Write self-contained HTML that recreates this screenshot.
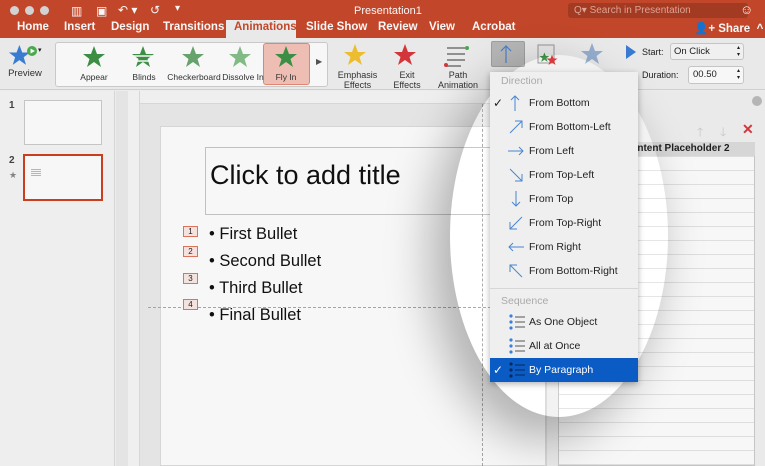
<!DOCTYPE html>
<html><head><meta charset="utf-8"><style>
*{margin:0;padding:0;box-sizing:border-box}
body{width:765px;height:466px;overflow:hidden;position:relative;font-family:"Liberation Sans",sans-serif;background:#f4f4f4;color:#222}
.a{position:absolute}
.tb{left:0;top:0;width:765px;height:38px;background:#c94a2c}
.tab{top:21px;font-size:11.5px;color:#fff;font-weight:bold}
.rib{left:0;top:38px;width:765px;height:52px;background:#f1f1f1;border-bottom:1px solid #d6d6d6}
.lbl{font-size:8.5px;color:#333;text-align:center;line-height:10px}
.mi{position:absolute;left:0;width:148px;height:24px;font-size:10.5px;line-height:24px;color:#222}
.mi span.t{position:absolute;left:39px}
.mi svg{position:absolute;left:18px;top:4px}
.ck{position:absolute;left:3px;font-size:12px}
</style></head><body>
<svg width="0" height="0" style="position:absolute"><defs><polygon id="st" points="12,1 15,9 23,9 16.5,14 19,22 12,17 5,22 7.5,14 1,9 9,9"/></defs></svg>
<div class="a tb"></div>
<div class="a" style="left:10px;top:6px;width:9px;height:9px;border-radius:50%;background:#d9d9d9"></div>
<div class="a" style="left:25px;top:6px;width:9px;height:9px;border-radius:50%;background:#d9d9d9"></div>
<div class="a" style="left:40px;top:6px;width:9px;height:9px;border-radius:50%;background:#d9d9d9"></div>
<div class="a" style="left:71px;top:4px;color:#fff;font-size:12px">▥</div>
<div class="a" style="left:96px;top:4px;color:#fff;font-size:12px">▣</div>
<div class="a" style="left:118px;top:3px;color:#fff;font-size:12px">↶ ▾</div>
<div class="a" style="left:150px;top:3px;color:#fff;font-size:12px">↺</div>
<div class="a" style="left:175px;top:3px;color:#fff;font-size:10px">▾</div>
<div class="a" style="left:354px;top:5px;color:#fff;font-size:11px">Presentation1</div>
<div class="a" style="left:568px;top:3px;width:180px;height:15px;background:#a93c24;border-radius:3px;color:#e7a999;font-size:10px;line-height:15px;padding-left:6px">Q▾ Search in Presentation</div>
<div class="a" style="left:740px;top:2px;color:#fff;font-size:13px">☺</div>
<div class="a" style="left:226px;top:20px;width:70px;height:19px;background:#f1f1f1"></div>
<div class="a tab" style="left:17px">Home</div>
<div class="a tab" style="left:64px">Insert</div>
<div class="a tab" style="left:111px">Design</div>
<div class="a tab" style="left:163px">Transitions</div>
<div class="a tab" style="left:234px;color:#c94a2c">Animations</div>
<div class="a tab" style="left:306px">Slide Show</div>
<div class="a tab" style="left:378px">Review</div>
<div class="a tab" style="left:429px">View</div>
<div class="a tab" style="left:472px">Acrobat</div>
<div class="a tab" style="left:694px">👤+ Share &nbsp;^</div>
<div class="a rib"></div>
<svg class="a" style="left:8px;top:44px" width="30" height="24"><use href="#st" fill="#3b7fd8" transform="scale(0.95)"/><circle cx="24" cy="7" r="5" fill="#4caf50"/><polygon points="22.5,4.5 27,7 22.5,9.5" fill="#fff"/></svg>
<div class="a" style="left:38px;top:46px;font-size:7px">▾</div>
<div class="a lbl" style="left:5px;top:69px;width:40px;font-size:9.5px">Preview</div>
<div class="a" style="left:55px;top:42px;width:273px;height:45px;background:#fff;border:1px solid #d0d0d0;border-radius:3px"></div>
<div class="a" style="left:263px;top:43px;width:47px;height:42px;background:#f6c5bb;border:1px solid #e88a76;border-radius:3px"></div>
<svg class="a" style="left:82px;top:45px" width="26" height="24"><use href="#st" fill="#3e9347"/></svg>
<svg class="a" style="left:131px;top:45px" width="26" height="24"><use href="#st" fill="#3e9347"/><line x1="0" y1="11" x2="26" y2="11" stroke="#fff" stroke-width="1.5"/><line x1="0" y1="16" x2="26" y2="16" stroke="#fff" stroke-width="1.5"/></svg>
<svg class="a" style="left:181px;top:45px" width="26" height="24"><use href="#st" fill="#6aa870"/></svg>
<svg class="a" style="left:228px;top:45px" width="26" height="24"><use href="#st" fill="#86c08a"/></svg>
<svg class="a" style="left:274px;top:45px" width="26" height="24"><use href="#st" fill="#3e9347"/></svg>
<div class="a lbl" style="left:74px;top:72px;width:40px">Appear</div>
<div class="a lbl" style="left:124px;top:72px;width:40px">Blinds</div>
<div class="a lbl" style="left:163px;top:72px;width:62px">Checkerboard</div>
<div class="a lbl" style="left:218px;top:72px;width:50px">Dissolve In</div>
<div class="a lbl" style="left:266px;top:72px;width:40px">Fly In</div>
<div class="a" style="left:316px;top:57px;font-size:8px;color:#555">▶</div>
<svg class="a" style="left:343px;top:43px" width="26" height="24"><use href="#st" fill="#f4c430"/></svg>
<div class="a lbl" style="left:335px;top:70px;width:45px;font-size:9px">Emphasis<br>Effects</div>
<svg class="a" style="left:393px;top:43px" width="26" height="24"><use href="#st" fill="#d9383c"/></svg>
<div class="a lbl" style="left:387px;top:70px;width:40px;font-size:9px">Exit<br>Effects</div>
<svg class="a" style="left:443px;top:45px" width="28" height="22" fill="none" stroke="#777" stroke-width="1.5"><path d="M4 3h18M4 9h18M4 15h18M4 21h14"/><circle cx="24" cy="3" r="2" fill="#4caf50" stroke="none"/><circle cx="3" cy="20" r="2" fill="#d9383c" stroke="none"/></svg>
<div class="a lbl" style="left:433px;top:70px;width:50px;font-size:9px">Path<br>Animation</div>
<div class="a" style="left:491px;top:41px;width:34px;height:26px;background:#bcbcbc;border:1px solid #a5a5a5;border-radius:2px"></div>
<svg class="a" style="left:499px;top:44px" width="14" height="20" fill="none" stroke="#4a86d0" stroke-width="1.2"><path d="M7 19V2M2 7l5-5 5 5"/></svg>
<svg class="a" style="left:537px;top:44px" width="22" height="22"><rect x="1" y="1" width="16" height="18" fill="#eee" stroke="#999"/><use href="#st" fill="#3e9347" transform="translate(2,8) scale(.45)"/><use href="#st" fill="#d9383c" transform="translate(9,10) scale(.5)"/></svg>
<svg class="a" style="left:580px;top:42px" width="26" height="24"><use href="#st" fill="#9ab3d6"/></svg>
<svg class="a" style="left:625px;top:45px" width="12" height="14"><polygon points="1,0 11,7 1,14" fill="#3b7fd8"/></svg>
<div class="a" style="left:642px;top:47px;font-size:9px">Start:</div>
<div class="a" style="left:670px;top:43px;width:74px;height:17px;background:#f8f8f8;border:1px solid #ccc;border-radius:3px;font-size:9.5px;line-height:15px;padding-left:3px">On Click<span style="position:absolute;right:3px;font-size:6px;line-height:7px;top:1px">▴<br>▾</span></div>
<div class="a" style="left:642px;top:70px;font-size:9px">Duration:</div>
<div class="a" style="left:688px;top:66px;width:56px;height:18px;background:#fff;border:1px solid #ccc;border-radius:3px;font-size:9.5px;line-height:16px;padding-left:4px">00.50<span style="position:absolute;right:3px;font-size:6px;line-height:7px;top:1px">▴<br>▾</span></div>
<div class="a" style="left:0;top:91px;width:115px;height:375px;background:#f6f6f6;border-right:1px solid #ddd"></div>
<div class="a" style="left:9px;top:100px;font-size:10px;font-weight:bold;color:#444">1</div>
<div class="a" style="left:24px;top:100px;width:78px;height:45px;background:#fff;border:1px solid #ccc"></div>
<div class="a" style="left:9px;top:155px;font-size:10px;font-weight:bold;color:#444">2</div>
<div class="a" style="left:9px;top:170px;font-size:9px;color:#888">★</div>
<div class="a" style="left:23px;top:154px;width:80px;height:47px;background:#fff;border:2px solid #d2401e"></div>
<div class="a" style="left:31px;top:169px;width:10px;height:1px;background:#bbb;box-shadow:0 2px #bbb,0 4px #bbb,0 6px #bbb"></div>
<div class="a" style="left:116px;top:91px;width:430px;height:375px;background:#ececec"></div>
<div class="a" style="left:128px;top:91px;width:12px;height:375px;background:#f7f7f7;border-right:1px solid #ddd"></div>
<div class="a" style="left:140px;top:91px;width:406px;height:13px;background:#f7f7f7;border-bottom:1px solid #ddd"></div>
<div class="a" style="left:160px;top:126px;width:386px;height:340px;background:#fff;border:1px solid #ddd"></div>
<div class="a" style="left:205px;top:147px;width:340px;height:68px;border:1px solid #c8c8c8;border-right:none"></div>
<div class="a" style="left:210px;top:160px;font-size:27px;color:#111">Click to add title</div>
<div class="a" style="left:148px;top:307px;width:398px;border-top:1px dashed #aaa"></div>
<div class="a" style="left:482px;top:104px;height:362px;border-left:1px dashed #aaa"></div>
<div class="a" style="left:209px;top:221px;font-size:16.5px;line-height:27px;color:#111">• First Bullet<br>• Second Bullet<br>• Third Bullet<br>• Final Bullet</div>
<div class="a" style="left:183px;top:226px;width:15px;height:11px;border:1px solid #e27660;background:#fbeae6;font-size:8px;text-align:center;line-height:9px">1</div>
<div class="a" style="left:183px;top:246px;width:15px;height:11px;border:1px solid #e27660;background:#fbeae6;font-size:8px;text-align:center;line-height:9px">2</div>
<div class="a" style="left:183px;top:273px;width:15px;height:11px;border:1px solid #e27660;background:#fbeae6;font-size:8px;text-align:center;line-height:9px">3</div>
<div class="a" style="left:183px;top:299px;width:15px;height:11px;border:1px solid #e27660;background:#fbeae6;font-size:8px;text-align:center;line-height:9px">4</div>
<div class="a" style="left:546px;top:91px;width:219px;height:375px;background:#f2f2f2;border-left:1px solid #ddd"></div>
<div class="a" style="left:752px;top:96px;width:10px;height:10px;border-radius:50%;background:#bbb"></div>
<div class="a" style="left:697px;top:123px;color:#ccc;font-size:12px">🡑</div>
<div class="a" style="left:720px;top:123px;color:#ccc;font-size:12px">🡓</div>
<div class="a" style="left:742px;top:121px;color:#d9383c;font-size:14px;font-weight:bold">✕</div>
<div class="a" style="left:558px;top:142px;width:197px;height:324px;background:repeating-linear-gradient(#fff 0 13px,#e6e6e6 13px 14px);border:1px solid #ccc"></div>
<div class="a" style="left:558px;top:142px;width:197px;height:14px;background:#ddd;font-size:10px;font-weight:bold;padding-left:66px;line-height:14px">Content Placeholder 2</div>
<div class="a" style="left:450px;top:55px;width:218px;height:362px;border-radius:50%;box-shadow:-15px 18px 45px 5px rgba(0,0,0,.28),0 0 0 600px rgba(0,0,0,.03)"></div>
<div class="a" style="left:490px;top:72px;width:148px;height:310px;background:#efefef;box-shadow:0 2px 6px rgba(0,0,0,.3)">
<div class="a" style="left:11px;top:3px;font-size:10.5px;color:#aaa">Direction</div>
<div class="mi" style="top:19px"><span class="ck">✓</span><svg width="14" height="16" fill="none" stroke="#4a86d0" stroke-width="1"><path d="M7 16V1M3 5l4-4 4 4"/></svg><span class="t">From Bottom</span></div>
<div class="mi" style="top:43px"><svg width="16" height="16" fill="none" stroke="#4a86d0"><path d="M2 14L14 2M7 2h7v7"/></svg><span class="t">From Bottom-Left</span></div>
<div class="mi" style="top:67px"><svg width="16" height="16" fill="none" stroke="#4a86d0"><path d="M0 8h15M11 4l4 4-4 4"/></svg><span class="t">From Left</span></div>
<div class="mi" style="top:91px"><svg width="16" height="16" fill="none" stroke="#4a86d0"><path d="M2 2l12 12M14 7v7H7"/></svg><span class="t">From Top-Left</span></div>
<div class="mi" style="top:115px"><svg width="16" height="16" fill="none" stroke="#4a86d0"><path d="M8 0v15M4 11l4 4 4-4"/></svg><span class="t">From Top</span></div>
<div class="mi" style="top:139px"><svg width="16" height="16" fill="none" stroke="#4a86d0"><path d="M14 2L2 14M2 7v7h7"/></svg><span class="t">From Top-Right</span></div>
<div class="mi" style="top:163px"><svg width="16" height="16" fill="none" stroke="#4a86d0"><path d="M16 8H1M5 4L1 8l4 4"/></svg><span class="t">From Right</span></div>
<div class="mi" style="top:187px"><svg width="16" height="16" fill="none" stroke="#4a86d0"><path d="M14 14L2 2M2 9V2h7"/></svg><span class="t">From Bottom-Right</span></div>
<div class="a" style="left:0;top:216px;width:148px;border-top:1px solid #d6d6d6"></div>
<div class="a" style="left:11px;top:223px;font-size:10.5px;color:#aaa">Sequence</div>
<div class="mi" style="top:238px"><svg width="18" height="16"><g fill="#3b7fd8"><circle cx="3" cy="2" r="1.6"/><circle cx="3" cy="8" r="1.6"/><circle cx="3" cy="14" r="1.6"/></g><path d="M7 3h10M7 8h10M7 13h10" stroke="#555"/></svg><span class="t">As One Object</span></div>
<div class="mi" style="top:262px"><svg width="18" height="16"><g fill="#3b7fd8"><circle cx="3" cy="2" r="1.6"/><circle cx="3" cy="8" r="1.6"/><circle cx="3" cy="14" r="1.6"/></g><path d="M7 3h10M7 8h10M7 13h10" stroke="#555"/></svg><span class="t">All at Once</span></div>
<div class="mi" style="top:286px;background:#0a5bc4;color:#fff"><span class="ck" style="color:#fff">✓</span><svg width="18" height="16"><g fill="#0a2a60"><circle cx="3" cy="2" r="1.6"/><circle cx="3" cy="8" r="1.6"/><circle cx="3" cy="14" r="1.6"/></g><path d="M7 3h10M7 8h10M7 13h10" stroke="#0a2a60"/></svg><span class="t">By Paragraph</span></div>
</div>
</body></html>
